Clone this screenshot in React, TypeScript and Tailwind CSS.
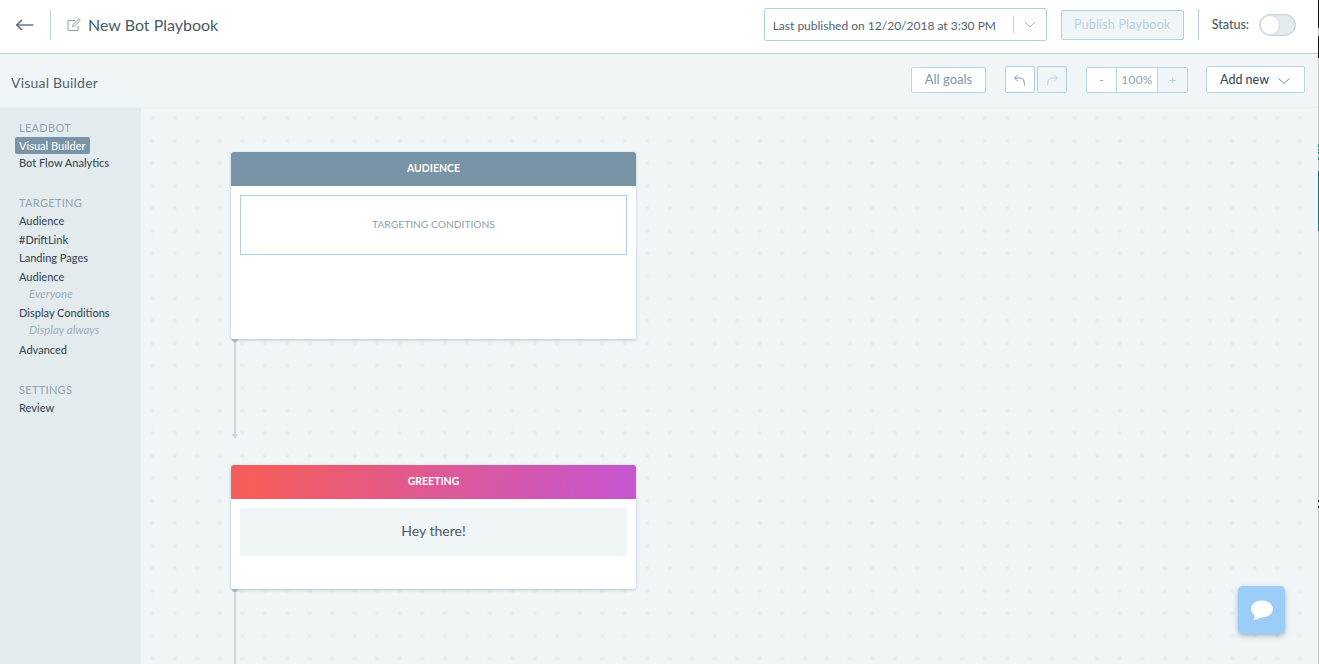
const font = "font-['Lato','Open_Sans',sans-serif]"

function SideHeading({ children }: { children: string }) {
  return <div className="pl-[19px] text-[11px] leading-[14px] tracking-[0.3px] text-[#8ea4b2]">{children}</div>
}

function SideLink({ children, top = 5 }: { children: string; top?: number }) {
  return (
    <div className="pl-[19px] text-[11px] leading-[14px] font-medium text-[#3c4c58]" style={{ marginTop: top }}>
      {children}
    </div>
  )
}

function SideNote({ children }: { children: string }) {
  return <div className="mt-[3px] pl-[29px] text-[11.5px] leading-[14px] italic text-[#9ab0bd]">{children}</div>
}

function Sidebar() {
  return (
    <aside className="w-[141px] shrink-0 bg-[#e4ebee] pt-[13px]">
      <SideHeading>LEADBOT</SideHeading>
      <div className="mt-[2px] ml-[15px] w-[75px] rounded-[2px] bg-[#7894a6] pl-[4px] text-[11px] leading-[17px] font-medium text-white">
        Visual Builder
      </div>
      <SideLink top={2}>Bot Flow Analytics</SideLink>

      <div className="mt-[26px]">
        <SideHeading>TARGETING</SideHeading>
      </div>
      <SideLink top={4}>Audience</SideLink>
      <SideLink>#DriftLink</SideLink>
      <SideLink top={4}>Landing Pages</SideLink>
      <SideLink>Audience</SideLink>
      <SideNote>Everyone</SideNote>
      <SideLink>Display Conditions</SideLink>
      <SideNote>Display always</SideNote>
      <SideLink top={6}>Advanced</SideLink>

      <div className="mt-[26px]">
        <SideHeading>SETTINGS</SideHeading>
      </div>
      <SideLink top={4}>Review</SideLink>
    </aside>
  )
}

function Connector({ height, arrow }: { height: number; arrow?: boolean }) {
  return (
    <div className="ml-[1px] flex w-[6px] flex-col items-center" style={{ height }}>
      <div className="h-[3px] w-[6px] rounded-b-full bg-[#a3b6c2]" />
      <div className="w-[1.5px] flex-1 bg-[#cbd5db]" />
      {arrow && <div className="h-0 w-0 border-x-[3px] border-t-[5px] border-x-transparent border-t-[#cbd5db]" />}
    </div>
  )
}

function Canvas() {
  return (
    <main className="relative flex-1 overflow-hidden bg-[#f0f5f8] bg-[radial-gradient(circle,#e6ecf0_1.8px,transparent_2.6px)] bg-[size:22.5px_22.5px] bg-[position:0px_-1px] pt-[44px] pl-[90px]">
      <section className="w-[405px] rounded-[3px] bg-white shadow-[0_1px_3px_rgba(100,125,140,0.4)]">
        <div className="flex h-[34px] items-center justify-center rounded-t-[3px] bg-[#7894a6] text-[10.5px] font-bold text-white">
          AUDIENCE
        </div>
        <div className="h-[153px] p-[9px]">
          <div className="flex h-[60px] items-center justify-center border border-[#aed0e0] text-[10.25px] text-[#8ba2b1]">
            TARGETING CONDITIONS
          </div>
        </div>
      </section>
      <Connector height={100} arrow />
      <section className="mt-[26px] w-[405px] rounded-[3px] bg-white shadow-[0_1px_3px_rgba(100,125,140,0.4)]">
        <div className="flex h-[34px] items-center justify-center rounded-t-[3px] bg-[linear-gradient(100deg,#f65d5a_5%,#c755cd_95%)] text-[10.5px] font-bold text-white">
          GREETING
        </div>
        <div className="h-[90px] p-[9px]">
          <div className="flex h-[48px] items-center justify-center rounded-[3px] bg-[#f0f5f8] pb-[4px] text-[14px] text-[#4a5a66]">
            Hey there!
          </div>
        </div>
      </section>
      <Connector height={80} />

      {/* Chat launcher */}
      <button className="absolute top-[478px] left-[1097px] flex h-[48px] w-[47px] items-center justify-center rounded-[5px] bg-[#9ccdf6] shadow-[0_2px_5px_rgba(70,80,90,0.4)]">
        <svg width="22" height="21" viewBox="0 0 22 21" fill="white">
          <ellipse cx="11" cy="9" rx="11" ry="8.500" />
          <path d="M4 14 L3 20 Q8 19 11 17 Z" />
        </svg>
      </button>
    </main>
  )
}

// thin strip of another window showing at the right screen edge
function EdgeStrip() {
  return (
    <div className="absolute top-0 right-0 flex h-full w-px flex-col bg-[#c4c4c4]">
      <div className="h-[28px] bg-[#111]" />
      <div className="h-[8px] bg-[#c4c4c4]" />
      <div className="h-[22px] bg-[#111]" />
      <div className="mt-[86px] h-[3px] bg-[#1a9a6a]" />
      <div className="mt-[2px] h-[2px] bg-[#1a9a6a]" />
      <div className="mt-px h-[2px] bg-[#1a9a6a]" />
      <div className="mt-[3px] h-[3px] bg-[#1a9a6a]" />
      <div className="mt-[11px] h-[60px] bg-[#1f6f7a]" />
      <div className="mt-[269px] h-[2px] bg-[#111]" />
      <div className="mt-[4px] h-[2px] bg-[#111]" />
    </div>
  )
}

export default function App() {
  return (
    <div className={`relative flex h-[664px] w-[1319px] flex-col overflow-hidden bg-white ${font}`}>
      {/* Top bar */}
      <header className="flex h-[54px] shrink-0 items-center border-b border-[#b8d0de] bg-white pb-[4px]">
        <div className="flex w-[51px] shrink-0 items-center justify-center border-r border-[#b8d0de] py-[5px]">
          <svg className="h-[20px] w-[18px]" viewBox="0 0 18 20" fill="none" stroke="#52636f" strokeWidth="1.300">
            <path d="M.5 10H17.500" />
            <path d="M6 5L.8 10 6 15" />
          </svg>
        </div>
        <svg className="ml-[16px] h-[14px] w-[14px]" viewBox="0 0 14 14" fill="none" stroke="#8ea4b2" strokeWidth="1">
          <path d="M11 8v4.500H1V2.500h7" />
          <path d="M5.500 8.500l.5-2L12 .8l1.300 1.300L7.500 8z" />
        </svg>
        <div className="ml-[7px] text-[16px] text-[#4a5a66]">New Bot Playbook</div>

        <div className="ml-auto flex h-[33px] w-[283px] items-center rounded-[2px] border border-[#aed0e0] pl-[8px]">
          <span className="flex-1 pt-[2px] text-[12px] text-[#52636f]">Last published on 12/20/2018 at 3:30 PM</span>
          <span className="h-[17px] w-px bg-[#c3d0d8]" />
          <svg className="mx-[10px] h-[7px] w-[12px]" viewBox="0 0 12 7" fill="none" stroke="#a9b9c3" strokeWidth="1">
            <path d="M1 1l5 5 5-5" />
          </svg>
        </div>
        <div className="ml-[14px] flex h-[30px] w-[123px] items-center justify-center rounded-[2px] border border-[#aed0e0] bg-[#f0f5f8] pt-[2px] text-[12.5px] tracking-[0.2px] text-[#b7d3e2]">
          Publish Playbook
        </div>
        <div className="ml-[14px] h-[31px] w-px bg-[#b8d0de]" />
        <div className="ml-[13px] pt-[2px] text-[12.5px] font-medium text-[#4a5a66]">Status:</div>
        <div className="mr-[23px] ml-[10px] h-[22px] w-[37px] rounded-full border border-[#c9d5dc] bg-[#e4ebee] shadow-[inset_0_0_1px_rgba(0,0,0,0.2)]">
          <div className="h-[20px] w-[20px] rounded-full border border-[#d5dee4] bg-white" />
        </div>
      </header>

      {/* Sub header */}
      <div className="flex h-[54px] shrink-0 items-center border-b border-[#e6eef2] bg-[#f0f5f8] pb-[2px] pl-[11px]">
        <div className="mt-[6px] text-[14px] tracking-[0.2px] text-[#52636f]">Visual Builder</div>
        <div className="ml-auto flex h-[26px] w-[75px] items-center justify-center rounded-[2px] border border-[#b8d5e4] bg-white text-[13px] text-[#7f97a6]">
          All goals
        </div>
        <div className="ml-[19px] flex h-[27px] w-[30px] items-center justify-center rounded-[2px] border border-[#aed0e0] bg-white">
          <svg width="14" height="14" viewBox="0 0 14 14" fill="none" stroke="#7f97a6" strokeWidth="1">
            <path d="M5 1.500L1.500 5 5 8.500" />
            <path d="M1.500 5H7c3 0 4.500 2.500 4.500 7.500" />
          </svg>
        </div>
        <div className="ml-[2px] flex h-[27px] w-[30px] items-center justify-center rounded-[2px] border border-[#aed0e0] bg-[#f0f5f8]">
          <svg width="14" height="14" viewBox="0 0 14 14" fill="none" stroke="#b7d3e2" strokeWidth="1">
            <path d="M9 1.500L12.500 5 9 8.500" />
            <path d="M12.500 5H7c-3 0-4.500 2.500-4.500 7.500" />
          </svg>
        </div>
        <div className="ml-[19px] flex h-[26px] w-[102px] items-center rounded-[2px] border border-[#b8d5e4] bg-white text-[12px] text-[#8ea4b2]">
          <span className="w-[29px] text-center">-</span>
          <span className="h-full w-[42px] border-x border-[#b8d5e4] text-center leading-[24px] tracking-[0.2px]">100%</span>
          <span className="flex h-full flex-1 items-center justify-center bg-[#f0f5f8] text-[#b7cbd6]">+</span>
        </div>
        <div className="mr-[14px] ml-[18px] flex h-[27px] w-[99px] items-center rounded-[2px] border border-[#b8d5e4] bg-white pl-[13px] text-[12.5px] font-medium text-[#3c4c58]">
          <span className="pt-[2px]">Add new</span>
          <svg className="mt-[3px] ml-[9px] h-[6px] w-[12px]" viewBox="0 0 12 6" fill="none" stroke="#6f8593" strokeWidth="0.9">
            <path d="M.5.500l5.500 5 5.500-5" />
          </svg>
        </div>
      </div>

      <div className="flex min-h-0 flex-1">
        <Sidebar />
        <Canvas />
      </div>
      <EdgeStrip />
    </div>
  )
}
